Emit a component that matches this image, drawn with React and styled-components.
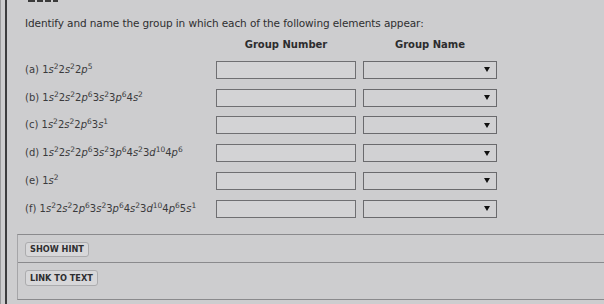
import React from "react";
import styled, { createGlobalStyle } from "styled-components";

const Global = createGlobalStyle`
  html, body { margin: 0; padding: 0; background: #cdcdcf; }
  body { font-family: "DejaVu Sans", Verdana, sans-serif; color: #2e2e30; }
  #root { width: 604px; height: 304px; overflow: hidden; }
`;

const Frame = styled.div`
  width: 604px;
  height: 304px;
  box-sizing: border-box;
  border-left: 1px solid #9a9a9c;
  padding-left: 4px;
  background: #cdcdcf;
`;

const Panel = styled.div`
  height: 304px;
  box-sizing: border-box;
  border-left: 2px solid #3c3c3e;
  padding-left: 10px;
  display: flex;
  flex-direction: column;
`;

const TopStub = styled.div`
  height: 3px;
  padding-left: 11px;
  display: flex;
  gap: 2px;
  align-items: flex-start;
`;

const StubGlyph = styled.span`
  width: ${(p) => p.$w}px;
  height: 2px;
  background: #3a3a3a;
`;

const Content = styled.div`
  padding-left: 8px;
  display: flex;
  flex-direction: column;
`;

const Prompt = styled.p`
  margin: 14px 0 0 0;
  font-size: 10.5px;
  line-height: 13px;
  letter-spacing: -0.1px;
  color: #2f2f31;
`;

const Table = styled.div`
  margin-top: 8px;
  display: grid;
  grid-template-columns: 184px 140px 134px;
  column-gap: 7px;
  row-gap: 9.8px;
  align-items: center;
`;

const Head = styled.div`
  font-size: 10px;
  font-weight: bold;
  text-align: center;
  line-height: 14px;
  margin-bottom: -1px;
  color: #2c2c2e;
`;

const Label = styled.div`
  font-size: 10px;
  line-height: 18px;
  color: #3a3a3c;
  white-space: nowrap;
  i { font-style: italic; }
  sup { font-size: 7.5px; vertical-align: 4px; line-height: 0; }
`;

const Input = styled.div`
  height: 18px;
  box-sizing: border-box;
  border: 1px solid #6f6f72;
  background: #d3d3d5;
`;

const Select = styled.div`
  height: 18px;
  box-sizing: border-box;
  border: 1px solid #6a6a6d;
  background: #d1d1d3;
  display: flex;
  align-items: center;
  justify-content: flex-end;
  padding-right: 6px;
`;

const Caret = styled.span`
  width: 0;
  height: 0;
  border-left: 3px solid transparent;
  border-right: 3px solid transparent;
  border-top: 5px solid #111;
`;

const Footer = styled.div`
  margin-top: 16px;
  border-top: 1px solid #8a8a8d;
  border-left: 1px solid #a5a5a8;
  border-bottom: 1px solid #8a8a8d;
  display: flex;
  flex-direction: column;
`;

const FooterRow = styled.div`
  padding: ${(p) => p.$pad};
  border-bottom: ${(p) => (p.$divider ? "1px solid #8a8a8d" : "none")};
  display: flex;
`;

const Button = styled.div`
  height: ${(p) => p.$h}px;
  box-sizing: border-box;
  padding: 0 4px;
  display: flex;
  align-items: center;
  border: 1px solid #acacae;
  border-radius: 3px;
  background: #d7d7d9;
  font-size: 8.2px;
  font-weight: bold;
  color: #2e2e30;
`;

const rows = [
  ["a", <>1<i>s</i><sup>2</sup>2<i>s</i><sup>2</sup>2<i>p</i><sup>5</sup></>],
  ["b", <>1<i>s</i><sup>2</sup>2<i>s</i><sup>2</sup>2<i>p</i><sup>6</sup>3<i>s</i><sup>2</sup>3<i>p</i><sup>6</sup>4<i>s</i><sup>2</sup></>],
  ["c", <>1<i>s</i><sup>2</sup>2<i>s</i><sup>2</sup>2<i>p</i><sup>6</sup>3<i>s</i><sup>1</sup></>],
  ["d", <>1<i>s</i><sup>2</sup>2<i>s</i><sup>2</sup>2<i>p</i><sup>6</sup>3<i>s</i><sup>2</sup>3<i>p</i><sup>6</sup>4<i>s</i><sup>2</sup>3<i>d</i><sup>10</sup>4<i>p</i><sup>6</sup></>],
  ["e", <>1<i>s</i><sup>2</sup></>],
  ["f", <>1<i>s</i><sup>2</sup>2<i>s</i><sup>2</sup>2<i>p</i><sup>6</sup>3<i>s</i><sup>2</sup>3<i>p</i><sup>6</sup>4<i>s</i><sup>2</sup>3<i>d</i><sup>10</sup>4<i>p</i><sup>6</sup>5<i>s</i><sup>1</sup></>],
];

export default function App() {
  return (
    <>
      <Global />
      <Frame>
        <Panel>
          <TopStub>
            <StubGlyph $w={7} />
            <StubGlyph $w={6} />
            <StubGlyph $w={6} />
            <StubGlyph $w={5} />
          </TopStub>
          <Content>
            <Prompt>Identify and name the group in which each of the following elements appear:</Prompt>
            <Table>
              <div />
              <Head>Group Number</Head>
              <Head>Group Name</Head>
              {rows.map(([k, f]) => (
                <React.Fragment key={k}>
                  <Label>({k}) {f}</Label>
                  <Input />
                  <Select><Caret /></Select>
                </React.Fragment>
              ))}
            </Table>
          </Content>
          <Footer>
            <FooterRow $divider $pad="7px 0 5px 7px">
              <Button $h={15}>SHOW HINT</Button>
            </FooterRow>
            <FooterRow $pad="7px 0 13px 7px">
              <Button $h={16}>LINK TO TEXT</Button>
            </FooterRow>
          </Footer>
        </Panel>
      </Frame>
    </>
  );
}
